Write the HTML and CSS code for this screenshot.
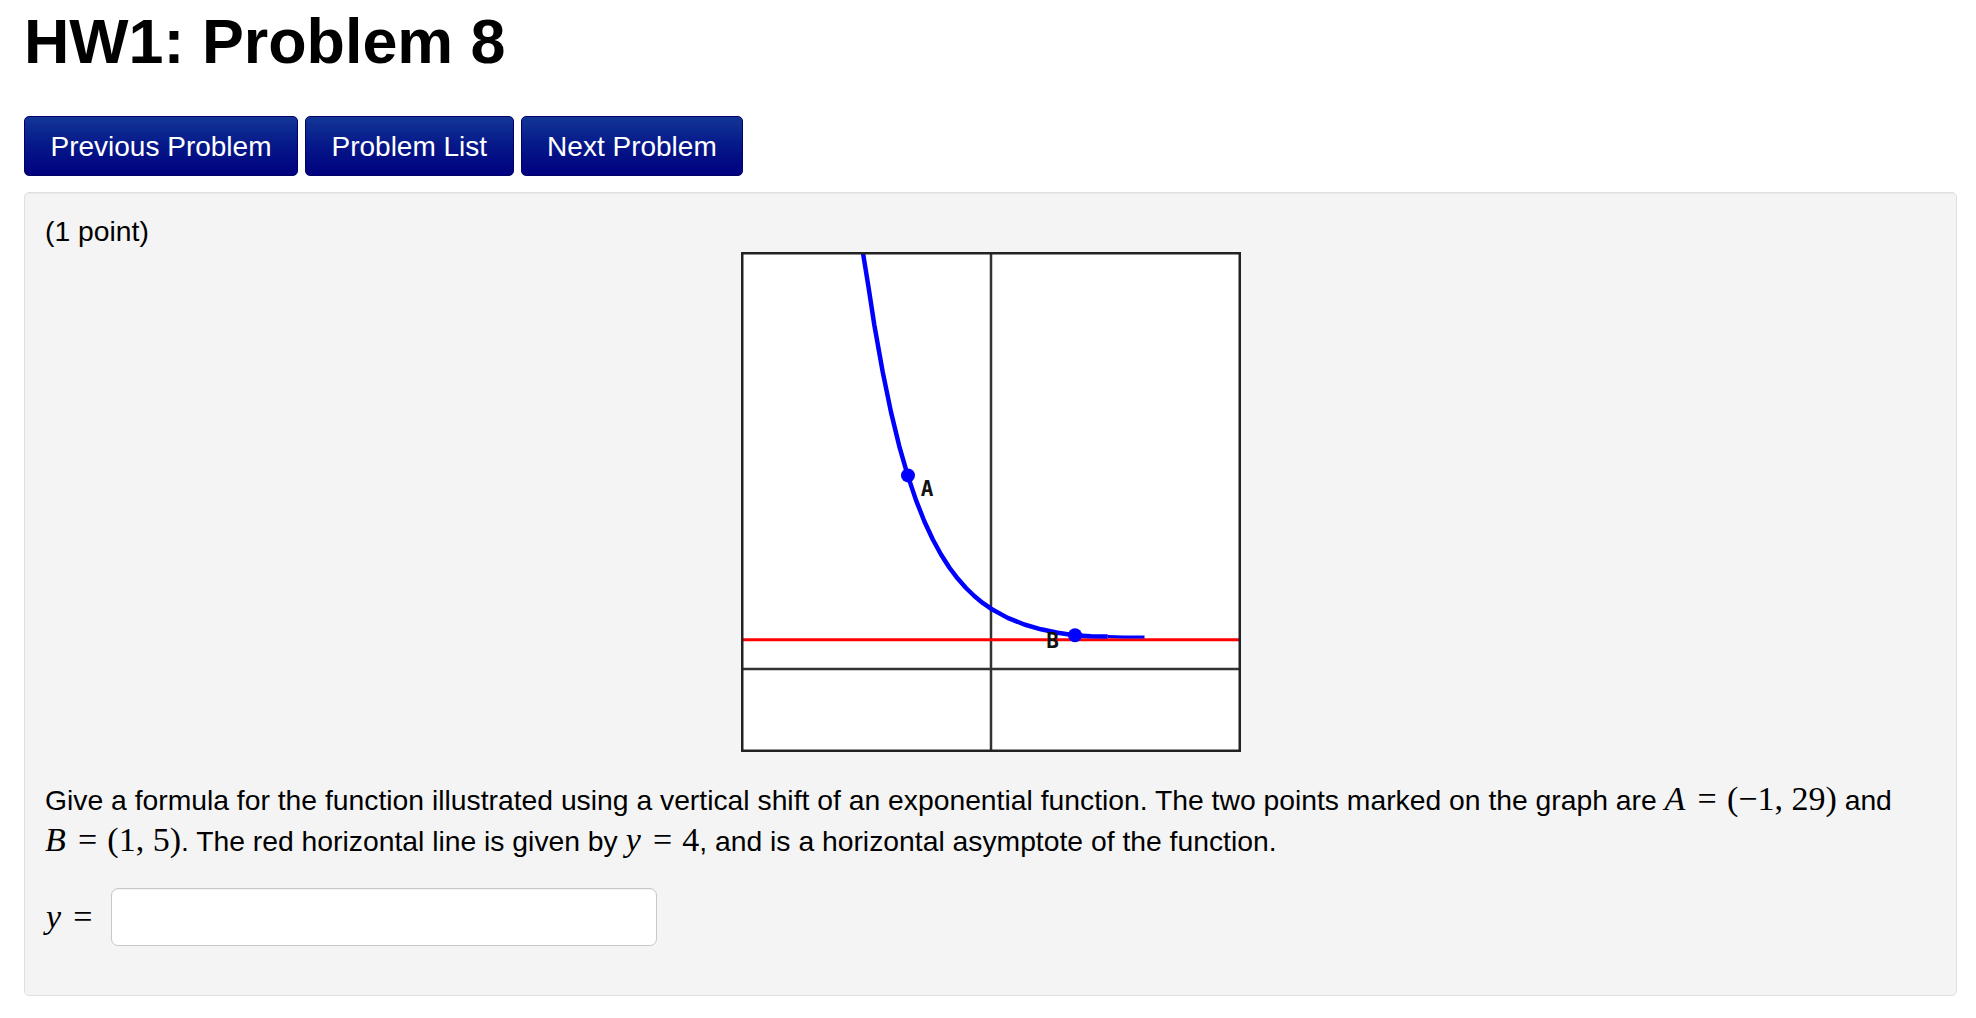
FILE: index.html
```html
<!DOCTYPE html>
<html lang="en">
<head>
    <meta charset="UTF-8">
    <meta name="viewport" content="width=device-width, initial-scale=1.0">
    <title>HW1: Problem 8</title>
    <link rel="stylesheet" href="styles.css">
</head>
<body>
    <div class="page">
        <h1 class="title">HW1: Problem 8</h1>

        <div class="nav">
            <a class="nav-btn" href="#">Previous Problem</a>
            <a class="nav-btn" href="#">Problem List</a>
            <a class="nav-btn" href="#">Next Problem</a>
        </div>

        <div class="problem">
            <p class="points">(1 point)</p>

            <div class="graph-wrap">
                <svg class="graph" width="500" height="500" viewBox="0 0 500 500">
                    <rect x="0" y="0" width="500" height="500" fill="#fff"/>
                    <!-- axes -->
                    <line x1="250" y1="0" x2="250" y2="500" stroke="#333" stroke-width="2.5"/>
                    <line x1="0" y1="417" x2="500" y2="417" stroke="#333" stroke-width="2.5"/>
                    <!-- asymptote y = 4 -->
                    <line x1="0" y1="387.8" x2="500" y2="387.8" stroke="#ff0000" stroke-width="3"/>
                    <!-- y = 5(0.2)^x + 4 -->
                    <path d="M121.5,-2 L127.5,35 L133.3,72.8 L141.7,119.9 L150,160.1 L158.3,194.3 L166.7,223.4 L175,248.1 L183.3,269.2 L191.7,287.2 L200,302.5 L208.3,315.5 L216.7,326.6 L225,336 L233.3,344 L241.7,350.9 L250,356.7 L266.7,365.9 L283.3,372.5 L300,377.3 L316.7,380.8 L333.3,383.2 L350,384.2 L366.7,384.6"
                          fill="none" stroke="#0000ff" stroke-width="4.5" stroke-linejoin="round"/>
                    <path d="M366.7,384.6 L383.3,384.9 L403.5,385" fill="none" stroke="#0000ff" stroke-width="3"/>
                    <circle cx="167" cy="223.4" r="7" fill="#0000ff"/>
                    <circle cx="334" cy="383.2" r="7" fill="#0000ff"/>
                    <text class="pt-label" x="186" y="237">A</text>
                    <text class="pt-label" x="311.5" y="389">B</text>
                    <rect x="1.25" y="1.25" width="497.5" height="497.5" fill="none" stroke="#222" stroke-width="2.5"/>
                </svg>
            </div>

            <p class="statement">
                Give a formula for the function illustrated using a vertical shift of an exponential function. The two points marked on the graph are
                <span class="math"><i>A</i><span class="rel">=</span>(−1,<span class="thin"></span>29)</span>
                and
                <span class="math"><i>B</i><span class="rel">=</span>(1,<span class="thin"></span>5)</span>. The red horizontal line is given by
                <span class="math"><i>y</i><span class="rel">=</span>4</span>, and is a horizontal asymptote of the function.
            </p>

            <div class="answer">
                <label class="math answer-label" for="ans"><i>y</i><span class="rel">=</span></label>
                <input class="answer-input" type="text" id="ans" name="ans">
            </div>
        </div>
    </div>
</body>
</html>
```

FILE: styles.css
```css
body {
    margin: 0;
    font-family: 'Liberation Sans', Arial, sans-serif;
    color: #000;
    background-color: #fff;
}

.page {
    padding: 4px 19px 20px 24px;
}

.title {
    margin: 0 0 38px;
    font-size: 62.8px;
    line-height: 74px;
    font-weight: bold;
    color: #000;
}

.nav {
    display: flex;
    gap: 7px;
    margin-bottom: 16px;
}

.nav-btn {
    display: block;
    padding: 13px 25.5px 12px;
    font-size: 28px;
    line-height: 33px;
    color: #fff;
    text-decoration: none;
    background: linear-gradient(to bottom, #123697 0%, #061a8a 45%, #00007e 100%);
    border: 1px solid #000066;
    border-radius: 5px;
}

.problem {
    background-color: #f4f4f4;
    border: 1px solid #e0e0e0;
    border-radius: 5px;
    box-shadow: inset 0 1px 1px rgba(0, 0, 0, 0.04);
    padding: 18px 20px;
    font-size: 28.3px;
    line-height: 40px;
}

.points {
    margin: 0;
}

.graph-wrap {
    margin-top: 1px;
}

.graph {
    display: block;
    margin: 0 auto;
}

.pt-label {
    font-family: 'DejaVu Sans Mono', monospace;
    font-weight: bold;
    font-size: 21px;
    fill: #111;
    text-anchor: middle;
    dominant-baseline: central;
}

.statement {
    margin: 27px 0 27px;
}

.math {
    font-family: 'Liberation Serif', 'Times New Roman', serif;
    font-size: 34px;
    white-space: nowrap;
}

.math i {
    padding-right: 2px;
}

.rel {
    margin: 0 0.3em;
}

.thin {
    display: inline-block;
    width: 0.25em;
}

.answer {
    display: flex;
    align-items: center;
    margin-bottom: 31px;
}

.answer-label {
    width: 65px;
    padding-left: 1px;
}

.answer-label .rel {
    margin-right: 0;
}

.answer-input {
    width: 546px;
    height: 58px;
    box-sizing: border-box;
    border: 1.5px solid #c8c8c8;
    border-radius: 7px;
    background-color: #fff;
    box-shadow: inset 0 1px 1px rgba(0, 0, 0, 0.06);
    font-size: 28px;
    padding: 0 12px;
}
```
